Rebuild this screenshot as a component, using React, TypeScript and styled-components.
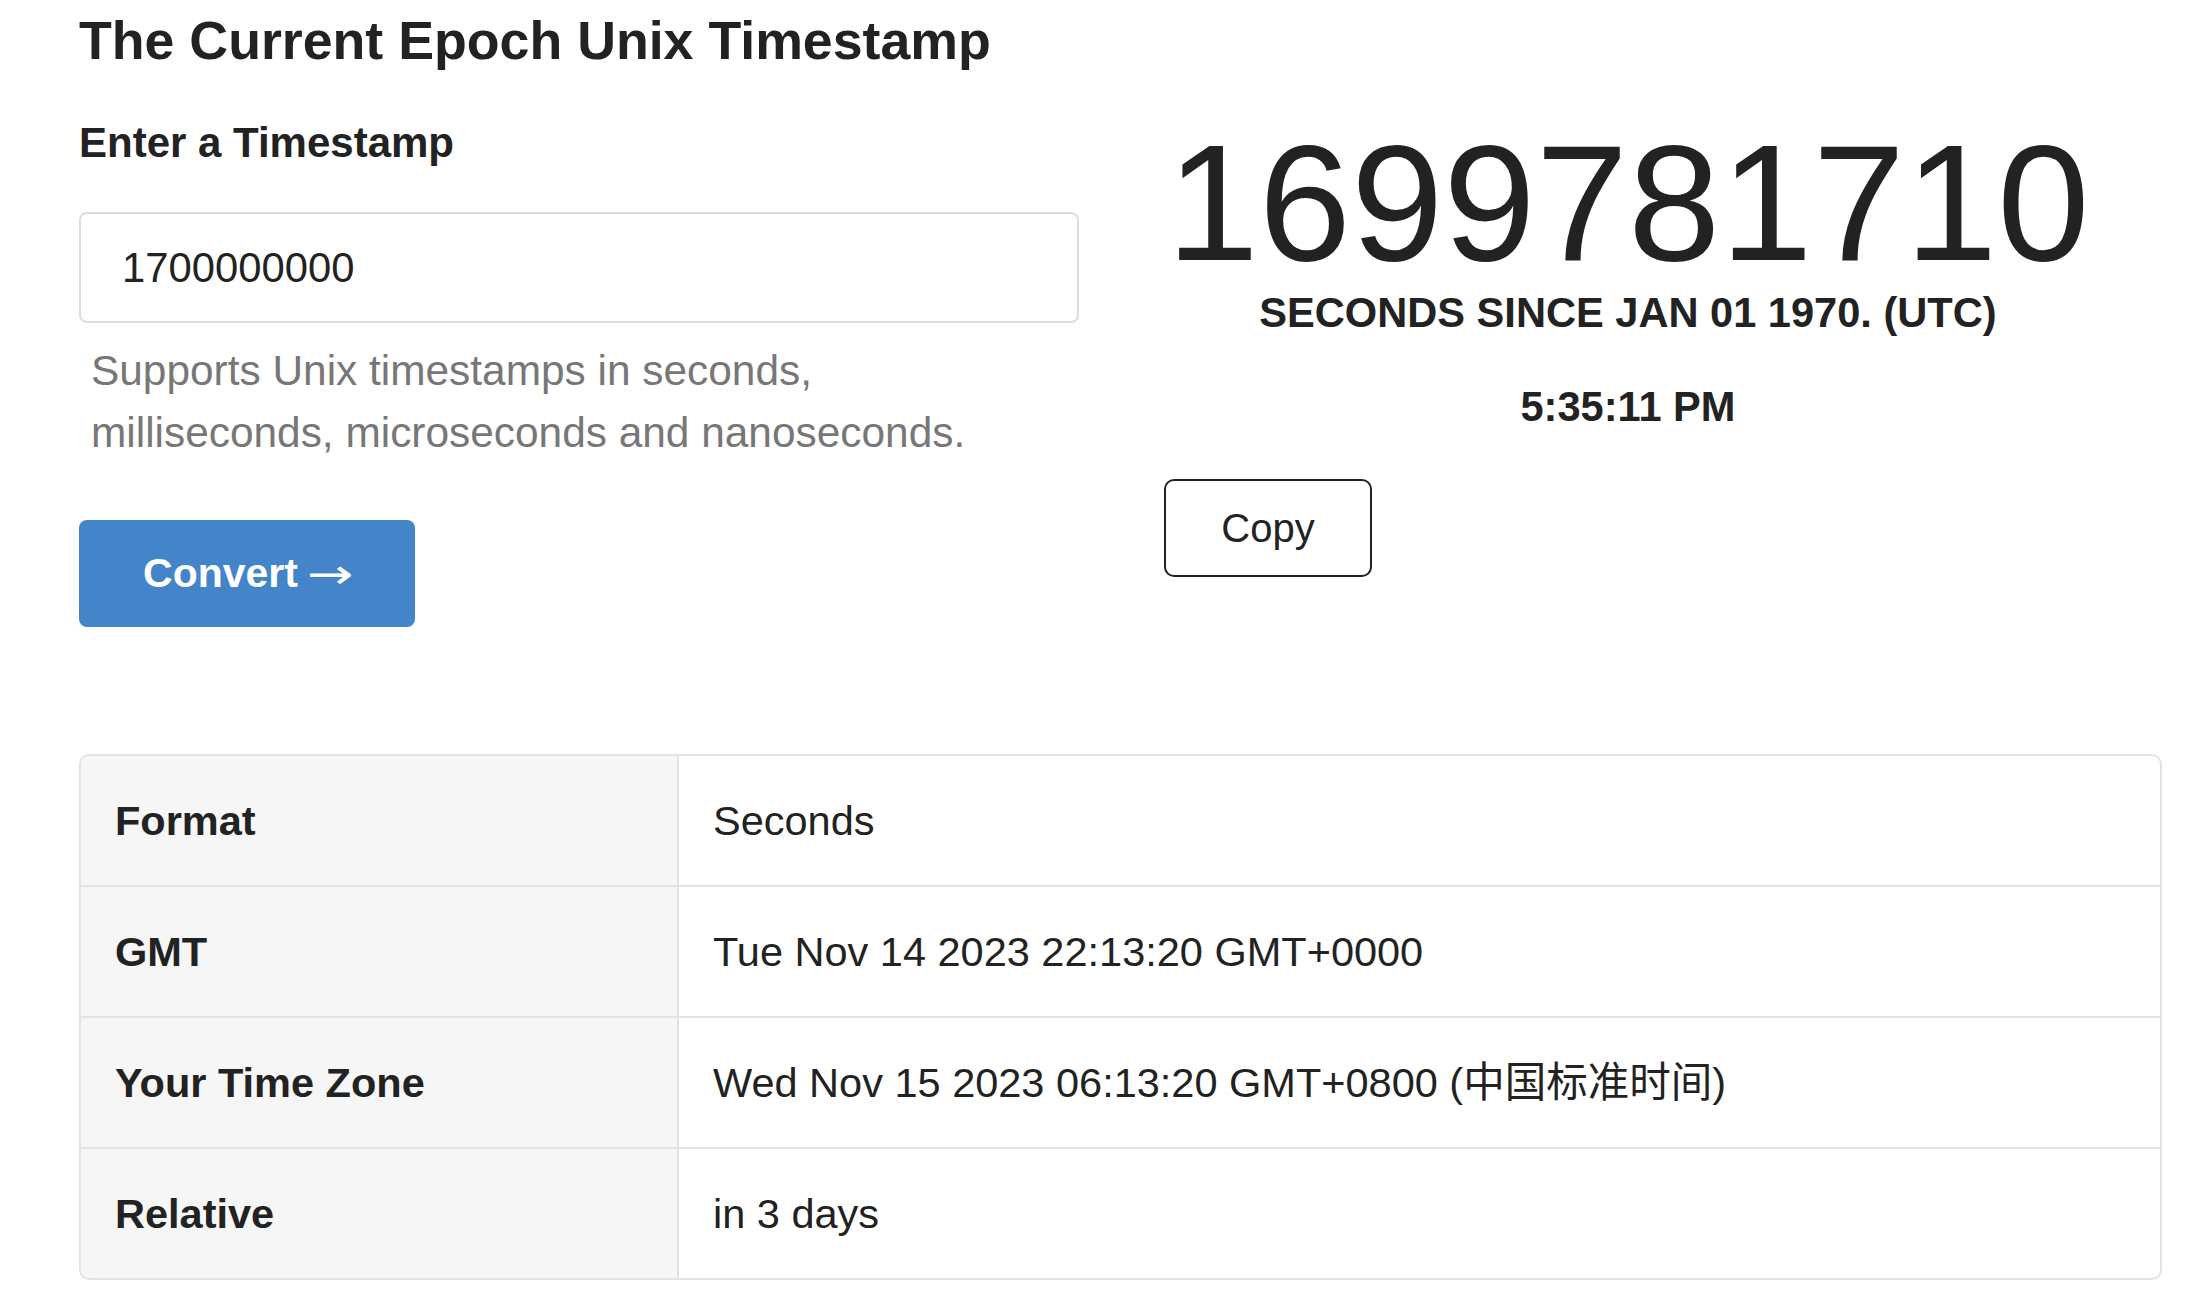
import styled, { createGlobalStyle } from "styled-components";

const GlobalStyle = createGlobalStyle`
    body {
        margin: 0;
        background: #fff;
        color: #222;
        font-family: "Liberation Sans", Arial, "Noto Sans CJK SC", sans-serif;
    }
`;

const Page = styled.div`
    padding: 8px 24px 12px 79px;
`;

const Title = styled.h1`
    margin: 0;
    font-size: 53.7px;
    line-height: 64px;
    font-weight: bold;
`;

const TopRow = styled.div`
    display: flex;
    margin-top: 46px;
`;

const LeftColumn = styled.div`
    flex: none;
    width: 1000px;
    display: flex;
    flex-direction: column;
    align-items: flex-start;
`;

const Label = styled.h2`
    margin: 0;
    font-size: 42px;
    line-height: 50px;
    font-weight: bold;
`;

const TimestampInput = styled.input`
    display: block;
    margin-top: 44px;
    width: 1000px;
    height: 111px;
    box-sizing: border-box;
    border: 2px solid #dedede;
    border-radius: 8px;
    padding: 0 41px;
    font-family: inherit;
    font-size: 41.8px;
    color: #222;
    outline: none;
`;

const Hint = styled.p`
    margin: 17px 0 0;
    padding-left: 12px;
    font-size: 42.4px;
    line-height: 62px;
    color: #777;
`;

const ConvertButton = styled.button`
    display: flex;
    align-items: center;
    justify-content: center;
    gap: 12px;
    margin-top: 56px;
    width: 336px;
    height: 107px;
    border: none;
    border-radius: 8px;
    background: #4484c9;
    color: #fff;
    font-family: inherit;
    font-size: 41px;
    font-weight: bold;
    cursor: pointer;
`;

const Arrow = styled.span`
    display: inline-block;
    width: 41px;
    font-family: "DejaVu Sans", sans-serif;
    font-weight: normal;
    text-align: center;
    transform: scaleX(1.35);
`;

const RightColumn = styled.div`
    flex: none;
    width: 928px;
    margin-left: 85px;
    display: flex;
    flex-direction: column;
    text-align: center;
`;

const BigNumber = styled.div`
    font-size: 166px;
    line-height: 169px;
`;

const Caption = styled.div<{ $gap?: number }>`
    margin-top: ${(p) => p.$gap ?? 0}px;
    font-size: 41.6px;
    line-height: ${(p) => (p.$gap ? 50 : 52)}px;
    font-weight: bold;
    text-transform: uppercase;
`;

const CopyButton = styled.button`
    align-self: flex-start;
    margin-top: 47px;
    width: 208px;
    height: 98px;
    border: 2px solid #222;
    border-radius: 10px;
    background: #fff;
    color: #222;
    font-family: inherit;
    font-size: 40px;
    cursor: pointer;
`;

const Table = styled.div`
    margin-top: 127px;
    border: 2px solid #e3e3e3;
    border-radius: 10px;
    overflow: hidden;
`;

const Row = styled.div`
    display: grid;
    grid-template-columns: 598px 1fr;
    height: 129px;

    & + & {
        border-top: 2px solid #e3e3e3;
    }
`;

const HeadCell = styled.div`
    display: flex;
    align-items: center;
    padding: 0 34px;
    background: #f6f6f6;
    border-right: 2px solid #e3e3e3;
    font-size: 41.5px;
    line-height: 50px;
    font-weight: bold;
`;

const ValueCell = styled.div`
    display: flex;
    align-items: center;
    padding: 0 34px;
    font-size: 41.5px;
    line-height: 50px;
`;

const rows = [
    ["Format", "Seconds"],
    ["GMT", "Tue Nov 14 2023 22:13:20 GMT+0000"],
    ["Your Time Zone", "Wed Nov 15 2023 06:13:20 GMT+0800 (中国标准时间)"],
    ["Relative", "in 3 days"],
];

export default function App() {
    return (
        <Page>
            <GlobalStyle />
            <Title>The Current Epoch Unix Timestamp</Title>

            <TopRow>
                <LeftColumn>
                    <Label>Enter a Timestamp</Label>
                    <TimestampInput defaultValue="1700000000" />
                    <Hint>
                        Supports Unix timestamps in seconds,
                        <br />
                        milliseconds, microseconds and nanoseconds.
                    </Hint>
                    <ConvertButton>
                        Convert<Arrow>→</Arrow>
                    </ConvertButton>
                </LeftColumn>

                <RightColumn>
                    <BigNumber>1699781710</BigNumber>
                    <Caption>Seconds since Jan 01 1970. (UTC)</Caption>
                    <Caption $gap={43}>5:35:11 PM</Caption>
                    <CopyButton>Copy</CopyButton>
                </RightColumn>
            </TopRow>

            <Table>
                {rows.map(([name, value]) => (
                    <Row key={name}>
                        <HeadCell>{name}</HeadCell>
                        <ValueCell>{value}</ValueCell>
                    </Row>
                ))}
            </Table>
        </Page>
    );
}
